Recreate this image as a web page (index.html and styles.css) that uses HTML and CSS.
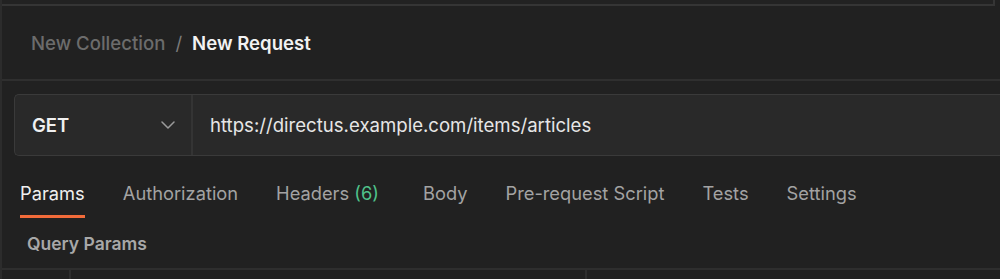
FILE: index.html
```html
<!DOCTYPE html>
<html>
<head>
<meta charset="utf-8">
<link rel="stylesheet" href="styles.css">
</head>
<body>
<div class="page">
  <div class="topbox"></div>
  <div class="breadcrumb">
    <span class="crumb-parent">New Collection</span>
    <span class="crumb-sep">/</span>
    <span class="crumb-current">New Request</span>
  </div>
  <div class="urlbar">
    <div class="method">
      <span class="method-name">GET</span>
      <svg class="chevron" width="14" height="8" viewBox="0 0 14 8"><path d="M1 1 L7 7 L13 1" fill="none" stroke="#9a9a9a" stroke-width="1.5" stroke-linecap="round" stroke-linejoin="round"/></svg>
    </div>
    <div class="url">https://directus.example.com/items/articles</div>
  </div>
  <div class="tabs">
    <div class="tab active">Params</div>
    <div class="tab">Authorization</div>
    <div class="tab">Headers <span class="count">(6)</span></div>
    <div class="tab">Body</div>
    <div class="tab">Pre-request Script</div>
    <div class="tab">Tests</div>
    <div class="tab">Settings</div>
  </div>
  <div class="section-title">Query Params</div>
  <div class="table">
    <div class="col c1"></div>
    <div class="col c2"></div>
    <div class="col c3"></div>
  </div>
</div>
</body>
</html>
```

FILE: styles.css
```css
* { box-sizing: border-box; }
html, body {
  margin: 0;
  padding: 0;
  background: #212121;
  width: 1000px;
  height: 279px;
  overflow: hidden;
}
.page {
  font-family: Inter, "Noto Sans", sans-serif;
  border-left: 2px solid #2c2c2c;
  height: 279px;
  display: flex;
  flex-direction: column;
}
.topbox {
  height: 6px;
  width: 993px;
  border-right: 2px solid #353535;
  border-bottom: 2px solid #353535;
  background: #222222;
  flex: none;
}
.breadcrumb {
  height: 75px;
  display: flex;
  align-items: center;
  padding-left: 29px;
  padding-top: 1px;
  font-size: 18.6px;
  border-bottom: 2px solid #2f2f2f;
  flex: none;
}
.crumb-parent { color: #6c6c6c; font-weight: 500; }
.crumb-sep { color: #7a7a7a; margin: 0 10px; }
.crumb-current { color: #f2f2f2; font-weight: 600; }
.urlbar {
  margin: 13px 0 0 12px;
  height: 62px;
  width: 1000px;
  display: flex;
  background: #292929;
  border: 1px solid #3a3a3a;
  border-right: none;
  border-radius: 5px 0 0 5px;
  flex: none;
}
.method {
  width: 178px;
  display: flex;
  align-items: center;
  justify-content: space-between;
  padding: 0 16px 0 17px;
  border-right: 2px solid #343434;
}
.method-name { color: #f0f0f0; font-weight: 600; font-size: 18.5px; }
.chevron { display: block; }
.url {
  display: flex;
  align-items: center;
  padding-left: 17px;
  color: #e6e6e6;
  font-size: 18.6px;
}
.tabs {
  display: flex;
  gap: 38px;
  padding-left: 18px;
  margin-top: 22px;
  height: 40px;
  flex: none;
}
.tab {
  color: #a3a3a3;
  font-size: 18.3px;
  height: 40px;
  line-height: 30px;
  border-bottom: 3px solid transparent;
}
.tab.active {
  color: #f0f0f0;
  border-bottom-color: #f26b3a;
}
.count { color: #4fc28a; margin-right: 6px; }
.section-title {
  color: #a8a8a8;
  font-weight: 600;
  font-size: 17.5px;
  padding-left: 25px;
  margin-top: 14px;
  height: 36px;
  line-height: 24px;
  flex: none;
}
.table {
  border-top: 2px solid #2e2e2e;
  display: flex;
  flex: 1;
}
.col { border-right: 2px solid #2e2e2e; }
.c1 { width: 69px; }
.c2 { width: 516px; }
.c3 { flex: 1; border-right: none; }
```
